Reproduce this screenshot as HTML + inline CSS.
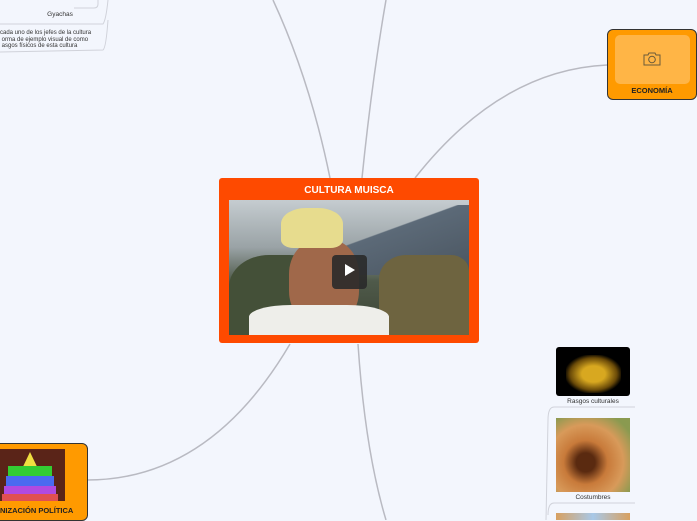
<!DOCTYPE html>
<html><head><style>
body{margin:0;width:697px;height:520px;overflow:hidden;background:#f3f6fd;font-family:"Liberation Sans",sans-serif;position:relative}
.a{position:absolute}
.t{font-size:6.5px;color:#333;text-align:center}
</style></head><body>
<svg class="a" style="left:0;top:0" width="697" height="520">
<g fill="none" stroke="#b9bac2" stroke-width="1.5">
<path d="M330 178 Q310 80 273 0"/>
<path d="M362 178 Q372 80 386 0"/>
<path d="M415 178 Q500 70 607 65"/>
<path d="M290 344 Q210 480 87 480"/>
<path d="M358 344 Q365 450 386 520"/>
</g>
<g fill="none" stroke="#d0d2da" stroke-width="1">
<path d="M98 0 L98 4 Q98 8 94 8 L74 8"/>
<path d="M108 0 Q106 20 103 24 L0 24"/>
<path d="M108 20 Q106 48 103 50 L0 52"/>
<path d="M554 407 Q548 407 548 420 L546 520"/>
<path d="M554 407 L635 407"/>
<path d="M554 503 Q548 503 548 515"/>
<path d="M554 503 L635 503"/>
</g>
</svg>
<div class="a t" style="left:30px;top:11px;width:60px">Gyachas</div>
<div class="a" style="left:0;top:30px;font-size:6px;color:#333;line-height:6.5px;white-space:nowrap">cada uno de los jefes de la cultura<br>&nbsp;orma de ejemplo visual de como<br>&nbsp;asgos físicos de esta cultura</div>

<div class="a" style="left:219px;top:178px;width:260px;height:165px;background:#fe4a00;border-radius:3px"></div>
<div class="a" style="left:219px;top:185px;width:260px;text-align:center;color:#fff;font-weight:bold;font-size:10px">CULTURA MUISCA</div>
<div class="a" style="left:229px;top:200px;width:240px;height:135px;overflow:hidden;background:linear-gradient(180deg,#c5ccd0 0%,#9aa3a6 35%,#4f5a4a 60%,#3b4233 100%)">
 <div class="a" style="left:90px;top:5px;width:150px;height:70px;background:linear-gradient(160deg,transparent 40%,#5c6a78 41%,#4a5560 100%)"></div>
 <div class="a" style="left:0;top:55px;width:100px;height:80px;background:#445038;border-radius:40% 40% 0 0"></div>
 <div class="a" style="left:150px;top:55px;width:90px;height:80px;background:#6e6440;border-radius:30% 20% 0 0"></div>
 <div class="a" style="left:60px;top:40px;width:70px;height:85px;background:#a0684a;border-radius:40%"></div>
 <div class="a" style="left:52px;top:8px;width:62px;height:40px;background:#e7dc8e;border-radius:40% 40% 20% 20%"></div>
 <div class="a" style="left:20px;top:105px;width:140px;height:40px;background:#eeeeea;border-radius:30% 30% 0 0"></div>
 <div class="a" style="left:103px;top:55px;width:35px;height:34px;background:#2a2a2a;border-radius:4px;opacity:.9"></div>
 <div class="a" style="left:116px;top:64px;width:0;height:0;border-left:10px solid #fff;border-top:6px solid transparent;border-bottom:6px solid transparent"></div>
</div>

<div class="a" style="left:607px;top:29px;width:88px;height:69px;background:#ff9a00;border:1px solid #333;border-radius:6px"></div>
<div class="a" style="left:615px;top:35px;width:75px;height:49px;background:#ffb546;border-radius:5px"></div>
<svg class="a" style="left:643px;top:51px" width="18" height="15"><g fill="none" stroke="#6b5a3a" stroke-width="1"><path d="M1 4 H5 L6 2 H12 L13 4 H17 V14 H1 Z"/><circle cx="9" cy="8.5" r="3.3"/></g></svg>
<div class="a" style="left:607px;top:86px;width:90px;text-align:center;font-weight:bold;font-size:7.5px;color:#222">ECONOMÍA</div>

<div class="a" style="left:-12px;top:443px;width:98px;height:76px;background:#ff9a00;border:1px solid #333;border-radius:6px"></div>
<div class="a" style="left:0;top:449px;width:65px;height:52px;background:#5a2418;overflow:hidden">
 <div class="a" style="left:8px;top:3px;width:0;height:0;border-left:22px solid transparent;border-right:22px solid transparent;border-bottom:46px solid #f0e040"></div>
 <div class="a" style="left:8px;top:17px;width:44px;height:10px;background:#3c3"></div>
 <div class="a" style="left:6px;top:27px;width:48px;height:10px;background:#4a6af0"></div>
 <div class="a" style="left:4px;top:37px;width:52px;height:8px;background:#b04ae0"></div>
 <div class="a" style="left:2px;top:45px;width:56px;height:7px;background:#e05050"></div>
</div>
<div class="a" style="left:0;top:506px;font-weight:bold;font-size:7.5px;color:#222">NIZACIÓN POLÍTICA</div>

<div class="a" style="left:556px;top:347px;width:74px;height:49px;background:#000;border-radius:3px;overflow:hidden"><div class="a" style="left:10px;top:8px;width:55px;height:38px;background:radial-gradient(ellipse,#d8a820 30%,#6a4a08 60%,#000 75%)"></div></div>
<div class="a t" style="left:548px;top:398px;width:90px">Rasgos culturales</div>
<div class="a" style="left:556px;top:418px;width:74px;height:74px;background:radial-gradient(circle at 40% 60%,#5a2a10 15%,#c87a3a 35%,#d89a5a 60%,#8a9a50 85%)"></div>
<div class="a t" style="left:548px;top:494px;width:90px">Costumbres</div>
<div class="a" style="left:556px;top:513px;width:74px;height:7px;background:linear-gradient(90deg,#d8a060,#a8c8e8,#d8a060)"></div>
</body></html>
